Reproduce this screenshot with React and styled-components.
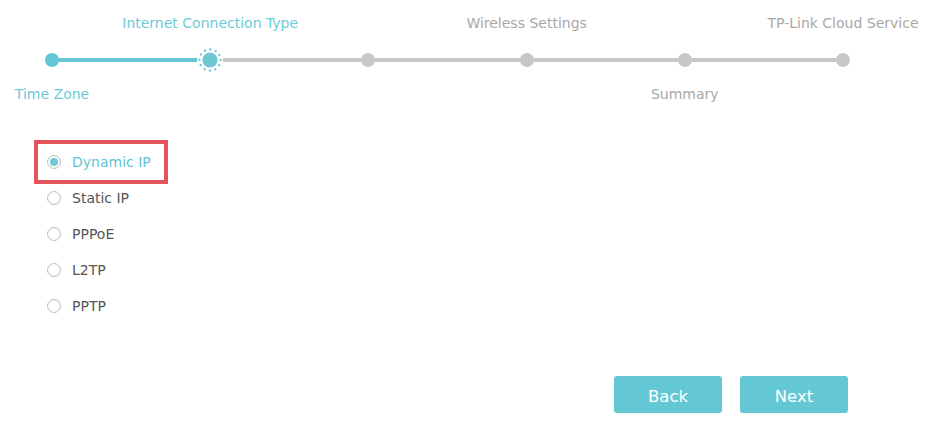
import React from "react";
import styled, { createGlobalStyle } from "styled-components";

const Global = createGlobalStyle`
  html, body { margin: 0; padding: 0; background: #fff; }
  body { font-family: "DejaVu Sans", Verdana, sans-serif; }
`;

const TEAL = "#62c6d4";
const GREY = "#c8c8c8";

const Page = styled.div`
  width: 934px;
  height: 429px;
  position: relative;
  overflow: hidden;
`;

const Stepper = styled.div`
  display: grid;
  grid-template-columns: 14px 1fr 14px 1fr 14px 1fr 14px 1fr 14px 1fr 14px;
  grid-template-rows: 44px 32px 34px;
  width: 805px;
  margin-left: 45px;
`;

const Label = styled.div`
  grid-row: ${(p) => (p.$top ? 1 : 3)};
  grid-column: ${(p) => p.$col};
  display: flex;
  justify-content: center;
  align-items: center;
  white-space: nowrap;
  font-size: 14px;
  padding-top: 1px;
  color: ${(p) => (p.$active ? "#6ccbd7" : "#a8a8a8")};
`;

const Dot = styled.div`
  grid-row: 2;
  grid-column: ${(p) => p.$col};
  align-self: center;
  width: 14px;
  height: 14px;
  border-radius: 50%;
  background: ${(p) => (p.$active ? TEAL : GREY)};
  z-index: 1;
`;

const CurrentDot = styled.svg`
  grid-row: 2;
  grid-column: ${(p) => p.$col};
  align-self: center;
  justify-self: center;
  width: 26px;
  height: 26px;
  flex: none;
  background: #fff;
  border-radius: 50%;
  z-index: 1;
`;

const Track = styled.div`
  grid-row: 2;
  grid-column: ${(p) => p.$col};
  align-self: center;
  height: 4px;
  margin: 0 -2px;
  background: ${(p) => (p.$active ? TEAL : GREY)};
`;

const List = styled.div`
  margin: 34px 0 0 38px;
  width: 126px;
`;

const Item = styled.label`
  display: flex;
  align-items: center;
  height: 36px;
  padding-left: 9px;
  gap: 11px;
  font-size: 14px;
  color: ${(p) => (p.$checked ? "#5fc4d2" : "#555")};
  outline: ${(p) => (p.$highlight ? "4px solid #e5545b" : "none")};
  white-space: nowrap;
`;

const Radio = styled.span`
  width: 14px;
  height: 14px;
  box-sizing: border-box;
  border-radius: 50%;
  border: 1.5px solid #bdbdbd;
  box-shadow: inset 0 0 1px rgba(0, 0, 0, 0.15);
  display: flex;
  align-items: center;
  justify-content: center;
  flex: none;
  &::after {
    content: "";
    width: 8px;
    height: 8px;
    border-radius: 50%;
    background: ${(p) => (p.$checked ? "#6ccad6" : "transparent")};
  }
`;

const Actions = styled.div`
  display: flex;
  justify-content: flex-end;
  gap: 18px;
  padding-right: 86px;
  margin-top: 52px;
`;

const Button = styled.button`
  width: 108px;
  height: 37px;
  border: none;
  border-radius: 3px;
  background: #64c8d4;
  color: #fff;
  font-family: "DejaVu Sans", Verdana, sans-serif;
  font-size: 16.5px;
  padding: 3px 0 0;
  cursor: pointer;
`;

const steps = [
  { label: "Time Zone", top: false, state: "done" },
  { label: "Internet Connection Type", top: true, state: "current" },
  { label: "", top: false, state: "todo" },
  { label: "Wireless Settings", top: true, state: "todo" },
  { label: "Summary", top: false, state: "todo" },
  { label: "TP-Link Cloud Service", top: true, state: "todo" },
];

const options = ["Dynamic IP", "Static IP", "PPPoE", "L2TP", "PPTP"];

export default function App() {
  return (
    <Page>
      <Global />
      <Stepper>
        {steps.map((s, i) => {
          const col = i * 2 + 1;
          const active = s.state !== "todo";
          return (
            <React.Fragment key={i}>
              {s.label && (
                <Label $top={s.top} $col={col} $active={active}>
                  {s.label}
                </Label>
              )}
              {s.state === "current" ? (
                <CurrentDot $col={col} viewBox="0 0 26 26">
                  <circle
                    cx="13"
                    cy="13"
                    r="10.6"
                    fill="none"
                    stroke="#7ccfda"
                    strokeWidth="2.6"
                    strokeLinecap="round"
                    strokeDasharray="0 5.55"
                  />
                  <circle cx="13" cy="13" r="7.6" fill="#70c7d4" />
                </CurrentDot>
              ) : (
                <Dot $col={col} $active={active} />
              )}
              {i < steps.length - 1 && (
                <Track $col={col + 1} $active={i === 0} />
              )}
            </React.Fragment>
          );
        })}
      </Stepper>
      <List>
        {options.map((o, i) => (
          <Item key={o} $checked={i === 0} $highlight={i === 0}>
            <Radio $checked={i === 0} />
            {o}
          </Item>
        ))}
      </List>
      <Actions>
        <Button>Back</Button>
        <Button>Next</Button>
      </Actions>
    </Page>
  );
}
